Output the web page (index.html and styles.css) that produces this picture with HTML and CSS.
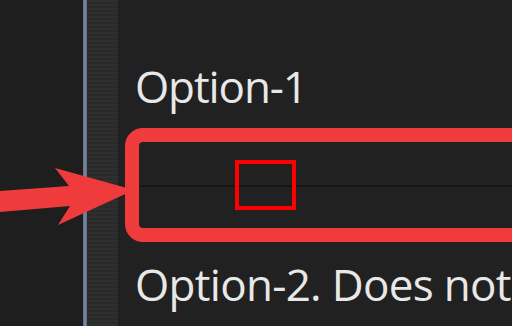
FILE: index.html
```html
<!DOCTYPE html>
<html>
<head>
<meta charset="utf-8">
<link rel="stylesheet" href="styles.css">
</head>
<body>
<div class="screen">
  <div class="left-pane"></div>
  <div class="divider"></div>
  <div class="gutter"></div>
  <div class="main">
    <div class="label">Option-1</div>
    <div class="field"></div>
    <div class="label label-2">Option-2. Does not</div>
  </div>
  <div class="highlight-box"></div>
  <div class="focus-box"></div>
  <svg class="arrow" width="512" height="326" viewBox="0 0 512 326">
    <polygon points="0,191 69,186 55,168 134,190 58,225 70,206 0,212" fill="#ef3b3b"/>
  </svg>
</div>
</body>
</html>
```
FILE: styles.css
```css
html, body {
  margin: 0;
  padding: 0;
  background: #212121;
}
.screen {
  position: relative;
  width: 512px;
  height: 326px;
  overflow: hidden;
  display: flex;
  font-family: "Open Sans", "Noto Sans", sans-serif;
}
.left-pane {
  width: 83px;
  background: #1e1e1e;
  flex: none;
}
.divider {
  width: 4px;
  background: linear-gradient(90deg, #5d6b80, #7d8ca4 50%, #5d6b80);
  flex: none;
}
.gutter {
  width: 31px;
  flex: none;
  background-color: #2a2a2a;
  background-image: repeating-linear-gradient(180deg, rgba(255,255,255,0.025) 0 2px, transparent 2px 4px);
}
.main {
  flex: 1;
  padding: 56px 0 0 17px;
  background: #212121;
  min-width: 0;
}
.label {
  font-size: 44px;
  line-height: 60px;
  letter-spacing: -1.1px;
  color: #e8e8e8;
  white-space: nowrap;
}
.field {
  margin-top: 28px;
  height: 41px;
  border-bottom: 2px solid #171717;
  margin-right: -40px;
}
.label-2 {
  margin-top: 67px;
  letter-spacing: -0.7px;
}
.highlight-box {
  position: absolute;
  left: 125px;
  top: 128px;
  width: 420px;
  height: 86px;
  border: 14px solid #ef3b3b;
  border-radius: 18px;
}
.focus-box {
  position: absolute;
  left: 235px;
  top: 160px;
  width: 53px;
  height: 42px;
  border: 4px solid #ff0000;
}
.arrow {
  position: absolute;
  left: 0;
  top: 0;
}
```
